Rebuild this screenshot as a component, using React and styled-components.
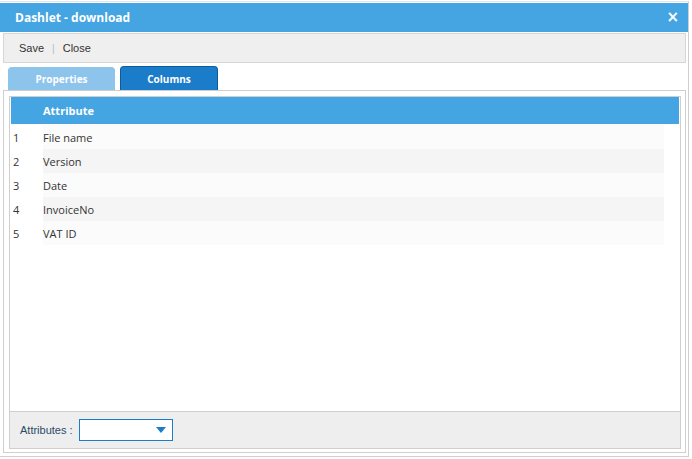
import React from "react";
import styled, { createGlobalStyle } from "styled-components";

const blue = "#45a5e2";
const darkBlue = "#1b7cc9";
const line = "#cfcfcf";

const GlobalStyle = createGlobalStyle`
  body {
    margin: 0;
    background: #fff;
    overflow: hidden;
  }
`;

const Window = styled.div`
  width: 688px;
  height: 454px;
  margin-top: 1px;
  border-top: 1px solid #e4e4e4;
  border-right: 1px solid ${line};
  border-bottom: 1px solid ${line};
  display: flex;
  flex-direction: column;
  font-family: "Open Sans", "Liberation Sans", sans-serif;
  background: #fff;
`;

const TitleBar = styled.div`
  height: 29px;
  margin-top: 1px;
  background: ${blue};
  color: #fff;
  padding: 0 9px 0 15px;
  display: flex;
  align-items: center;
  justify-content: space-between;
  font-size: 12px;
  font-weight: 700;
`;

const CloseX = styled.span`
  font-size: 15px;
  line-height: 1;
  font-family: "DejaVu Sans", sans-serif;
`;

const Body = styled.div`
  flex: 1;
  display: flex;
  flex-direction: column;
  padding: 1px 2px 3px 3px;
`;

const Toolbar = styled.div`
  height: 28px;
  background: #efefef;
  border: 1px solid #d6d6d6;
  display: flex;
  align-items: center;
  padding-left: 15px;
  font-family: "Liberation Sans", sans-serif;
  font-size: 11px;
  color: #333;
`;

const ToolItem = styled.span`
  cursor: pointer;
`;

const Sep = styled.span`
  color: #bbb;
  margin: 0 8px 0 8px;
  font-size: 10px;
`;

const Tabs = styled.div`
  display: flex;
  align-items: flex-end;
  gap: 5px;
  padding-left: 5px;
  margin-top: 3px;
`;

const Tab = styled.div`
  width: ${p => (p.active ? "98px" : "107px")};
  height: ${p => (p.active ? "24px" : "23px")};
  box-sizing: border-box;
  border-radius: 4px 4px 0 0;
  background: ${p => (p.active ? darkBlue : "#8cc4ec")};
  border: 1px solid ${p => (p.active ? "#0d5c9e" : "#8cc4ec")};
  border-bottom: none;
  color: #fff;
  font-size: 10px;
  font-weight: 700;
  display: flex;
  align-items: center;
  justify-content: center;
`;

const Panel = styled.div`
  flex: 1;
  border: 1px solid ${line};
  padding: 5px 4px 3px 5px;
  display: flex;
  flex-direction: column;
`;

const Grid = styled.div`
  flex: 1;
  border: 1px solid ${line};
  display: flex;
  flex-direction: column;
`;

const Header = styled.div`
  height: 27px;
  border: 1px solid #fff;
  border-top: none;
  background: ${blue};
  color: #fff;
  font-size: 11px;
  font-weight: 700;
  display: flex;
  align-items: center;
  padding-left: 32px;
`;

const Rows = styled.div`
  flex: 1;
  padding-right: 16px;
`;

const Row = styled.div`
  height: 24px;
  display: flex;
  align-items: center;
  font-size: 11px;
  color: #333;
`;

const Num = styled.div`
  width: 30px;
  padding-left: 3px;
  height: 100%;
  display: flex;
  align-items: center;
  background: #fff;
`;

const Name = styled.div`
  flex: 1;
  height: 100%;
  display: flex;
  align-items: center;
  background: ${p => (p.odd ? "#f5f5f5" : "#fbfbfb")};
`;

const Footer = styled.div`
  height: 36px;
  border-top: 1px solid ${line};
  background: #eeeeee;
  display: flex;
  align-items: center;
  padding-left: 10px;
  gap: 6px;
  font-family: "Liberation Sans", sans-serif;
  font-size: 11px;
  color: #2b4a68;
`;

const Select = styled.div`
  width: 94px;
  height: 22px;
  box-sizing: border-box;
  border: 1px solid ${darkBlue};
  background: #fff;
  display: flex;
  align-items: center;
  justify-content: flex-end;
  padding-right: 6px;
`;

const Caret = styled.span`
  width: 0;
  height: 0;
  border-left: 5px solid transparent;
  border-right: 5px solid transparent;
  border-top: 6px solid ${darkBlue};
`;

const attributes = ["File name", "Version", "Date", "InvoiceNo", "VAT ID"];

export default function App() {
  return (
    <>
      <GlobalStyle />
      <Window>
        <TitleBar>
          <span>Dashlet - download</span>
          <CloseX>×</CloseX>
        </TitleBar>
        <Body>
          <Toolbar>
            <ToolItem>Save</ToolItem>
            <Sep>|</Sep>
            <ToolItem>Close</ToolItem>
          </Toolbar>
          <Tabs>
            <Tab>Properties</Tab>
            <Tab active>Columns</Tab>
          </Tabs>
          <Panel>
            <Grid>
              <Header>Attribute</Header>
              <Rows>
                {attributes.map((a, i) => (
                  <Row key={a}>
                    <Num>{i + 1}</Num>
                    <Name odd={i % 2 === 1}>{a}</Name>
                  </Row>
                ))}
              </Rows>
              <Footer>
                <span>Attributes :</span>
                <Select>
                  <Caret />
                </Select>
              </Footer>
            </Grid>
          </Panel>
        </Body>
      </Window>
    </>
  );
}
